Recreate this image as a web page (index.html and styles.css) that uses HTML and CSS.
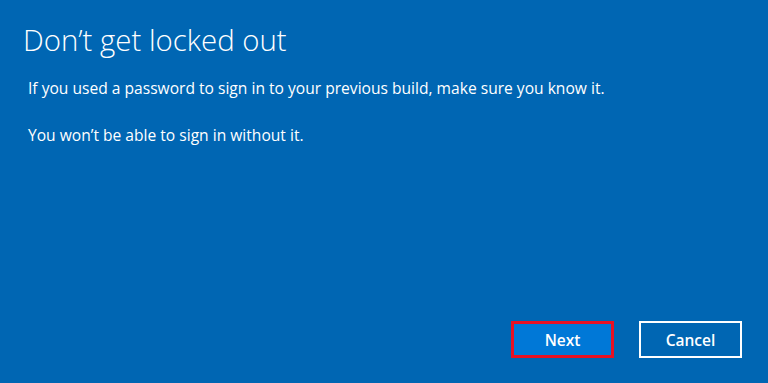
FILE: index.html
```html
<!DOCTYPE html>
<html lang="en">
<head>
    <meta charset="UTF-8">
    <meta name="viewport" content="width=device-width, initial-scale=1.0">
    <title>Don’t get locked out</title>
    <link rel="stylesheet" href="styles.css">
</head>
<body>
    <div class="page">
        <h1>Don’t get locked out</h1>
        <p>If you used a password to sign in to your previous build, make sure you know it.</p>
        <p>You won’t be able to sign in without it.</p>
        <div class="actions">
            <button class="btn primary">Next</button>
            <button class="btn">Cancel</button>
        </div>
    </div>
</body>
</html>
```

FILE: styles.css
```css
html, body {
    height: 100%;
}
body {
    margin: 0;
    background: #0066b3;
    color: #fff;
    font-family: "Open Sans", "Noto Sans", sans-serif;
}
.page {
    height: 100%;
    box-sizing: border-box;
    display: flex;
    flex-direction: column;
    padding: 21px 26px 25px 23px;
}
h1 {
    margin: 0 0 18px;
    font-size: 29.4px;
    font-weight: 300;
    line-height: 38px;
}
p {
    margin: 0 0 25px 5px;
    font-size: 15.6px;
    line-height: 22px;
}
.actions {
    margin-top: auto;
    display: flex;
    justify-content: flex-end;
    gap: 25px;
}
.btn {
    width: 103px;
    height: 37px;
    box-sizing: border-box;
    background: transparent;
    color: #fff;
    border: 2px solid #fff;
    font-family: "Open Sans", "Noto Sans", sans-serif;
    font-size: 15.5px;
    font-weight: 600;
    cursor: pointer;
}
.primary {
    background: #0078d7;
    border: 3px solid #e81123;
}
```
